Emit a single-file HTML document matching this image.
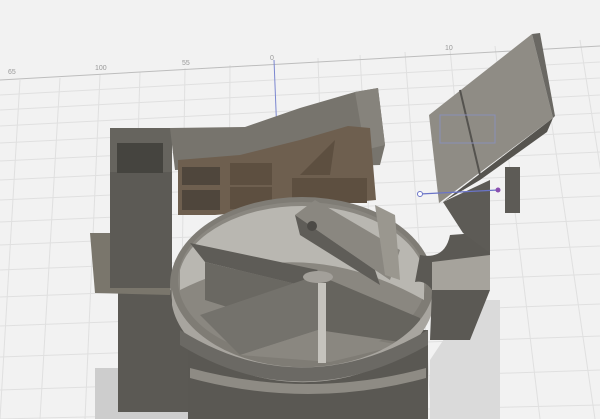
<!DOCTYPE html>
<html><head><style>
html,body{margin:0;padding:0;background:#f2f2f2;}
svg{display:block;}
</style></head><body>
<svg width="600" height="419" viewBox="0 0 600 419" xmlns="http://www.w3.org/2000/svg">
<rect width="600" height="419" fill="#f2f2f2"/>
<g stroke="#e0e0e0" stroke-width="1">
<line x1="0" y1="95" x2="600" y2="62"/>
<line x1="0" y1="110" x2="600" y2="78"/>
<line x1="0" y1="126" x2="600" y2="95"/>
<line x1="0" y1="143" x2="600" y2="113"/>
<line x1="0" y1="161" x2="600" y2="132"/>
<line x1="0" y1="180" x2="600" y2="152"/>
<line x1="0" y1="200" x2="600" y2="173"/>
<line x1="0" y1="222" x2="600" y2="196"/>
<line x1="0" y1="245" x2="600" y2="220"/>
<line x1="0" y1="270" x2="600" y2="246"/>
<line x1="0" y1="297" x2="600" y2="274"/>
<line x1="0" y1="326" x2="600" y2="304"/>
<line x1="0" y1="357" x2="600" y2="336"/>
<line x1="0" y1="390" x2="600" y2="370"/>
<line x1="0" y1="419" x2="600" y2="405"/>
<line x1="20" y1="80" x2="0" y2="419"/>
<line x1="60" y1="78" x2="40" y2="419"/>
<line x1="100" y1="75" x2="85" y2="419"/>
<line x1="140" y1="72" x2="130" y2="419"/>
<line x1="185" y1="68" x2="180" y2="419"/>
<line x1="230" y1="65" x2="228" y2="419"/>
<line x1="318" y1="58" x2="330" y2="419"/>
<line x1="360" y1="55" x2="380" y2="419"/>
<line x1="405" y1="52" x2="432" y2="419"/>
<line x1="450" y1="49" x2="485" y2="419"/>
<line x1="495" y1="46" x2="540" y2="419"/>
<line x1="540" y1="43" x2="595" y2="419"/>
<line x1="580" y1="40" x2="640" y2="419"/>
</g>
<line x1="0" y1="80" x2="600" y2="46" stroke="#bdbdbd" stroke-width="1"/>
<line x1="274" y1="60" x2="278" y2="160" stroke="#7a86d0" stroke-width="1"/>
<g font-family="Liberation Sans, sans-serif" font-size="7" fill="#999">
<text x="8" y="74">65</text><text x="95" y="70">100</text><text x="182" y="65">55</text><text x="270" y="60">0</text><text x="445" y="50">10</text>
</g>
<!-- floor shadow -->
<rect x="95" y="368" width="95" height="51" fill="#cdcdcd"/>
<polygon points="470,300 500,300 500,419 430,419 430,360" fill="#dadada"/>
<!-- lower left block -->
<rect x="118" y="290" width="75" height="122" fill="#5b5954"/>
<!-- flange -->
<polygon points="90,233 170,233 170,295 95,293" fill="#7a766c"/>
<!-- left tall box -->
<rect x="110" y="128" width="62" height="160" fill="#66645e"/>
<rect x="110" y="172" width="62" height="116" fill="#5c5a55"/>
<rect x="117" y="143" width="46" height="30" fill="#45443f"/>
<!-- top body -->
<polygon points="170,128 245,127 300,108 355,92 378,88 385,145 380,165 175,170" fill="#77746d"/>
<polygon points="355,92 378,88 385,145 365,150" fill="#86837c"/>
<!-- brown panel -->
<polygon points="178,160 240,155 300,140 348,126 370,128 376,200 215,215 178,215" fill="#6e5f4f"/>
<rect x="182" y="167" width="38" height="18" fill="#4f463c"/>
<rect x="182" y="190" width="38" height="20" fill="#4f463c"/>
<rect x="230" y="163" width="42" height="22" fill="#5d4f40"/>
<rect x="230" y="187" width="42" height="22" fill="#5d4f40"/>
<rect x="292" y="178" width="75" height="25" fill="#5d4f40"/>
<polygon points="300,175 335,140 330,175" fill="#5d4f40"/>
<!-- bowl bottom cylinder -->
<rect x="188" y="330" width="240" height="89" fill="#5a5853"/>
<path d="M190,368 Q308,400 426,368 L426,378 Q308,410 190,378 Z" fill="#8e8b84"/>
<!-- bowl outer -->
<ellipse cx="302" cy="285" rx="132" ry="88" fill="#7f7c75"/>
<ellipse cx="302" cy="280" rx="124" ry="78" fill="#8a8780"/>
<path d="M180,270 A124,78 0 0 1 424,270 L424,300 Q300,230 180,290 Z" fill="#b9b7b1"/>
<!-- dividers -->
<polygon points="190,243 318,270 300,285 205,262" fill="#5e5c57"/>
<polygon points="205,262 300,285 300,330 205,300" fill="#6a6862"/>
<polygon points="200,315 318,275 318,330 240,355" fill="#74726c"/>
<polygon points="318,275 420,318 420,345 318,330" fill="#66645e"/>
<polygon points="240,355 318,330 400,345 330,362" fill="#8a8780"/>
<ellipse cx="318" cy="277" rx="15" ry="6" fill="#a3a09a"/>
<rect x="318" y="283" width="8" height="80" fill="#c5c3bd"/>
<path d="M172,290 A132,88 0 0 0 434,290 L434,305 A132,88 0 0 1 172,305 Z" fill="#a8a59f"/>
<path d="M180,330 Q300,405 428,330 L428,345 Q300,418 180,345 Z" fill="#6b6964"/>
<!-- arm -->
<polygon points="295,215 315,200 400,250 390,280 375,270" fill="#8a8780"/>
<polygon points="295,215 375,270 380,285 300,235" fill="#5f5d58"/>
<circle cx="312" cy="226" r="5" fill="#4c4a46"/>
<polygon points="375,205 395,215 400,280 385,275" fill="#9a978f"/>
<!-- right elbow -->
<path d="M420,255 Q445,260 450,235 L490,232 L490,290 L470,340 L430,340 L432,290 Q425,280 415,282 Z" fill="#5b5954"/>
<polygon points="432,262 490,255 490,290 432,290" fill="#a6a39c"/>
<!-- right panel -->
<polygon points="443,202 490,180 490,253 463,233" fill="#5d5b56"/>
<rect x="505" y="167" width="15" height="46" fill="#5d5b56"/>
<polygon points="429,115 532,34 553,118 439,203" fill="#8f8c85"/>
<polygon points="532,34 540,33 555,116 553,118" fill="#6a6863"/>
<polygon points="443,202 553,118 547,132 480,180" fill="#56544f"/>
<line x1="460" y1="90" x2="480" y2="175" stroke="#55534f" stroke-width="2"/>
<rect x="440" y="115" width="55" height="28" fill="none" stroke="#8a8fb8" stroke-width="1"/>
<line x1="420" y1="194" x2="498" y2="190" stroke="#6a74c8" stroke-width="1.2"/>
<circle cx="420" cy="194" r="2.5" fill="#fff" stroke="#6a74c8"/>
<circle cx="498" cy="190" r="2.5" fill="#8a4fb0"/>
</svg>
</body></html>
